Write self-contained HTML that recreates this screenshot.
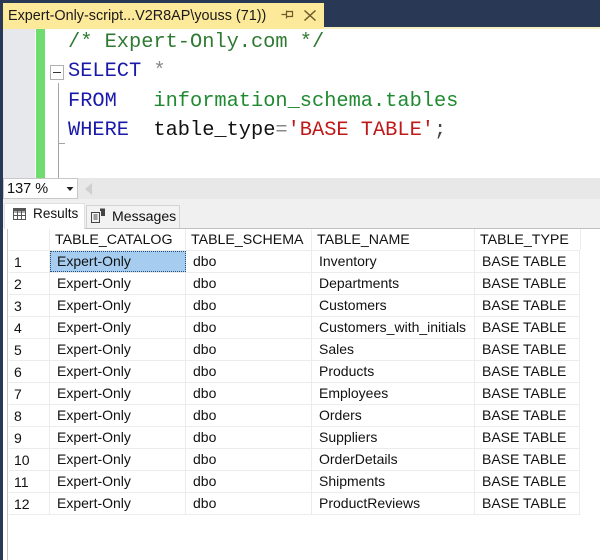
<!DOCTYPE html>
<html><head><meta charset="utf-8">
<style>
html,body{margin:0;padding:0;background:#fff}
#p{position:relative;width:600px;height:560px;overflow:hidden;background:#fff;font-family:"Liberation Sans",sans-serif;color:#111}
#p div{position:absolute}
.t{white-space:pre;line-height:22px;font-size:14px}
.c{font-family:"Liberation Mono",monospace;font-size:20.33px;line-height:28px;white-space:pre;left:68px;color:#111}
.k{color:#1a1aaa}.g{color:#2f7a32}.o{color:#888}.r{color:#c01818}.f{color:#1f8a30}
.v{background:#ececec;width:1px;top:229px;height:286px}
.h{background:#ececec;height:1px;left:9px;width:570px}
.b{font-size:14.2px}
</style></head><body><div id="p">
<div style="left:0;top:0;width:600px;height:27px;background:#293955"></div>
<div style="left:0;top:0;width:3px;height:560px;background:#293955"></div>
<div style="left:3px;top:27px;width:597px;height:2px;background:#f6f1c4"></div>
<div style="left:3px;top:3px;width:321px;height:26px;background:#fde99a"></div>
<div class="t" style="left:8px;top:5px;font-size:14.4px;color:#1a1a1a">Expert-Only-script...V2R8AP\youss (71))</div>
<svg style="position:absolute;left:280px;top:8px" width="44" height="16" viewBox="0 0 44 16"><path d="M1.500 6.500H6M6.500 2.500V10.500M6.500 3.500H12.500V8.500H6.500" fill="none" stroke="#6b5a2a" stroke-width="1.200"/><path d="M24.500 2.500L35.500 12.500M35.500 2.500L24.500 12.500" fill="none" stroke="#6b5a2a" stroke-width="1.500"/></svg>

<div style="left:3px;top:29px;width:32px;height:149px;background:#e6e8eb"></div>
<div style="left:36px;top:29px;width:9px;height:149px;background:#6fdc6f"></div>
<div style="left:58px;top:83px;width:1px;height:95px;background:#a5a5a5"></div>
<div style="left:58px;top:143px;width:7px;height:1px;background:#a5a5a5"></div>
<div style="left:49.500px;top:65px;width:14.500px;height:15px;border:1.500px solid #b0b0b0;box-sizing:border-box;background:#fff"></div>
<div style="left:53px;top:72px;width:8px;height:1px;background:#333"></div>
<div class="c g" style="top:29px">/* Expert-Only.com */</div>
<div class="c" style="top:58px"><span class="k">SELECT</span> <span class="o">*</span></div>
<div class="c" style="top:88px"><span class="k">FROM</span>   <span class="f">information_schema.tables</span></div>
<div class="c" style="top:117px"><span class="k">WHERE</span>  table_type<span class="o">=</span><span class="r">'BASE TABLE'</span><span style="color:#444">;</span></div>

<div style="left:3px;top:178px;width:597px;height:21px;background:#e8e8e8"></div>
<div style="left:3px;top:199px;width:597px;height:29px;background:#f0f0f0"></div>
<div style="left:3px;top:178px;width:75px;height:21px;background:#fff;border:1px solid #c8c8c8;box-sizing:border-box"></div>
<div class="t" style="left:7px;top:178px;font-size:14.500px">137 %</div>
<svg style="position:absolute;left:66px;top:186px" width="8" height="6"><path d="M.500 1H7.500L4 5Z" fill="#222"/></svg>
<svg style="position:absolute;left:84px;top:182px" width="10" height="14"><path d="M8 1V13L1 7Z" fill="#cfcfcf"/></svg>

<div style="left:8px;top:228px;width:592px;height:1px;background:#c0c0c0"></div>
<div style="left:7px;top:229px;width:1px;height:331px;background:#c4c4c4"></div>
<div style="left:4px;top:203px;width:81px;height:26px;background:#fff;border:1px solid #e0e0e0;border-bottom:0;box-sizing:border-box"></div>
<div style="left:86px;top:205px;width:94px;height:23px;background:#f2f2f2;border:1px solid #d4d4d4;border-bottom:0;box-sizing:border-box"></div>
<svg style="position:absolute;left:13px;top:208px" width="13" height="13"><path d="M.500 .500H12.500V11.500H.500ZM.500 4H12.500M.500 7.500H12.500M4.500 .500V11.500M8.500 .500V11.500" fill="none" stroke="#555"/><path d="M0 0H13V3H0Z" fill="#555"/></svg>
<svg style="position:absolute;left:91px;top:208px" width="15" height="16"><path d="M.500 4.500H8.500V14.500H.500ZM2.500 7H6.500M2.500 9H6.500M2.500 11H6.500" fill="none" stroke="#444"/><path d="M9 .500H14V8H10V3H9Z" fill="#444"/></svg>
<div class="t" style="left:33px;top:203px;font-size:13.6px">Results</div>
<div class="t" style="left:112px;top:205px;font-size:14.1px">Messages</div>

<div class="v" style="left:49px"></div><div class="v" style="left:185px"></div><div class="v" style="left:311px"></div><div class="v" style="left:474px"></div><div class="v" style="left:580px;height:21px"></div><div class="v" style="left:579px;top:250px;height:265px"></div>
<div class="h" style="top:250px"></div><div class="h" style="top:272px"></div><div class="h" style="top:294px"></div><div class="h" style="top:316px"></div><div class="h" style="top:338px"></div><div class="h" style="top:360px"></div><div class="h" style="top:382px"></div><div class="h" style="top:404px"></div><div class="h" style="top:426px"></div><div class="h" style="top:448px"></div><div class="h" style="top:470px"></div><div class="h" style="top:492px"></div><div class="h" style="top:514px"></div>
<div style="left:50px;top:251px;width:136px;height:21px;background:#a6cdef;border:1px dotted #25507a;box-sizing:border-box"></div>

<div class="t b" style="left:55px;top:229px">TABLE_CATALOG</div><div class="t b" style="left:191px;top:229px">TABLE_SCHEMA</div><div class="t b" style="left:317px;top:229px">TABLE_NAME</div><div class="t b" style="left:480px;top:229px">TABLE_TYPE</div>

<div class="t" style="left:14px;top:251px">1</div><div class="t" style="left:57px;top:250px">Expert-Only</div><div class="t" style="left:193px;top:250px">dbo</div><div class="t" style="left:319px;top:250px">Inventory</div><div class="t" style="left:482px;top:250px">BASE TABLE</div>
<div class="t" style="left:14px;top:273px">2</div><div class="t" style="left:57px;top:272px">Expert-Only</div><div class="t" style="left:193px;top:272px">dbo</div><div class="t" style="left:319px;top:272px">Departments</div><div class="t" style="left:482px;top:272px">BASE TABLE</div>
<div class="t" style="left:14px;top:295px">3</div><div class="t" style="left:57px;top:294px">Expert-Only</div><div class="t" style="left:193px;top:294px">dbo</div><div class="t" style="left:319px;top:294px">Customers</div><div class="t" style="left:482px;top:294px">BASE TABLE</div>
<div class="t" style="left:14px;top:317px">4</div><div class="t" style="left:57px;top:316px">Expert-Only</div><div class="t" style="left:193px;top:316px">dbo</div><div class="t" style="left:319px;top:316px">Customers_with_initials</div><div class="t" style="left:482px;top:316px">BASE TABLE</div>
<div class="t" style="left:14px;top:339px">5</div><div class="t" style="left:57px;top:338px">Expert-Only</div><div class="t" style="left:193px;top:338px">dbo</div><div class="t" style="left:319px;top:338px">Sales</div><div class="t" style="left:482px;top:338px">BASE TABLE</div>
<div class="t" style="left:14px;top:361px">6</div><div class="t" style="left:57px;top:360px">Expert-Only</div><div class="t" style="left:193px;top:360px">dbo</div><div class="t" style="left:319px;top:360px">Products</div><div class="t" style="left:482px;top:360px">BASE TABLE</div>
<div class="t" style="left:14px;top:383px">7</div><div class="t" style="left:57px;top:382px">Expert-Only</div><div class="t" style="left:193px;top:382px">dbo</div><div class="t" style="left:319px;top:382px">Employees</div><div class="t" style="left:482px;top:382px">BASE TABLE</div>
<div class="t" style="left:14px;top:405px">8</div><div class="t" style="left:57px;top:404px">Expert-Only</div><div class="t" style="left:193px;top:404px">dbo</div><div class="t" style="left:319px;top:404px">Orders</div><div class="t" style="left:482px;top:404px">BASE TABLE</div>
<div class="t" style="left:14px;top:427px">9</div><div class="t" style="left:57px;top:426px">Expert-Only</div><div class="t" style="left:193px;top:426px">dbo</div><div class="t" style="left:319px;top:426px">Suppliers</div><div class="t" style="left:482px;top:426px">BASE TABLE</div>
<div class="t" style="left:14px;top:449px">10</div><div class="t" style="left:57px;top:448px">Expert-Only</div><div class="t" style="left:193px;top:448px">dbo</div><div class="t" style="left:319px;top:448px">OrderDetails</div><div class="t" style="left:482px;top:448px">BASE TABLE</div>
<div class="t" style="left:14px;top:471px">11</div><div class="t" style="left:57px;top:470px">Expert-Only</div><div class="t" style="left:193px;top:470px">dbo</div><div class="t" style="left:319px;top:470px">Shipments</div><div class="t" style="left:482px;top:470px">BASE TABLE</div>
<div class="t" style="left:14px;top:493px">12</div><div class="t" style="left:57px;top:492px">Expert-Only</div><div class="t" style="left:193px;top:492px">dbo</div><div class="t" style="left:319px;top:492px">ProductReviews</div><div class="t" style="left:482px;top:492px">BASE TABLE</div>
</div></body></html>
